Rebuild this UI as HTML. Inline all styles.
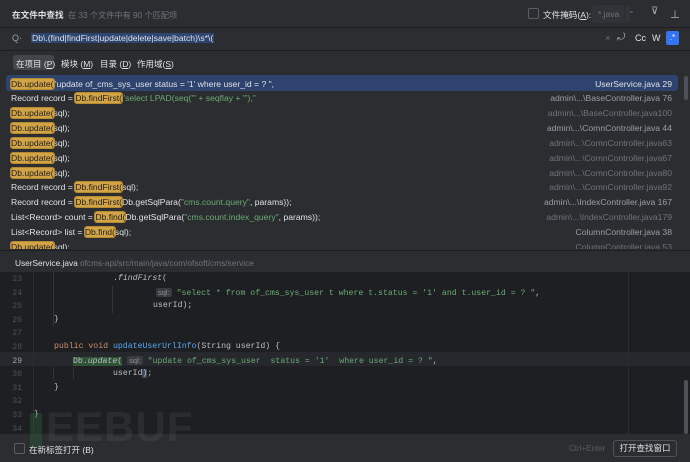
<!DOCTYPE html>
<html><head><meta charset="utf-8"><style>
*{margin:0;padding:0;box-sizing:border-box}
body{width:690px;height:462px;background:#2b2d30;font-family:"Liberation Sans","Noto Sans CJK SC",sans-serif;color:#dfe1e5;position:relative;overflow:hidden;font-size:8.6px}
.a{position:absolute;white-space:nowrap}
.hl{background:#d3a446;color:#1e1f22;border-radius:2px;outline:1px solid #b48a33}
.g{color:#6aab73}
.row{position:absolute;left:6px;width:672px;height:15px;line-height:15px;padding-left:5px}
.row .r{position:absolute;right:6px;top:0;color:#6f737a}
.row .r.b{color:#9a9ea6}
.code{font-family:"Liberation Mono",monospace;font-size:8.2px}
.ln{position:absolute;left:0;width:22px;text-align:right;color:#4b5059;font-family:"Liberation Mono",monospace;font-size:8px}
.cl{position:absolute;height:13.6px;line-height:13.6px;white-space:pre}
.kw{color:#cf8e6d}.st{color:#6aab73}.it{font-style:italic}
.hint{background:#393b40;color:#8c9099;border-radius:2px;padding:0 2px;font-family:"Liberation Sans",sans-serif;font-size:7.5px}
</style></head><body>
<!-- title -->
<div class="a" style="left:12px;top:9px;font-size:8.6px;font-weight:bold;color:#dfe1e5">在文件中查找</div>
<div class="a" style="left:68px;top:9px;font-size:8.2px;color:#6f737a">在 33 个文件中有 90 个匹配项</div>
<div class="a" style="left:528px;top:8px;width:11px;height:11px;border:1px solid #5a5d63;border-radius:2px"></div>
<div class="a" style="left:543px;top:9px;font-size:8.6px;color:#dfe1e5">文件掩码(<u>A</u>):</div>
<div class="a" style="left:592px;top:5px;width:38px;height:18px;background:#313338;border-radius:3px;color:#6f737a;font-size:8.5px;line-height:18px;padding-left:6px">*.java</div>
<div class="a" style="left:624px;top:5px;width:1px;height:18px;background:#2b2d30"></div>
<div class="a" style="left:628px;top:6px;color:#6f737a;font-size:8px">⌄</div>
<div class="a" style="left:651px;top:6px;color:#b4b8bf;font-size:10px">⊽</div>
<div class="a" style="left:670px;top:6px;color:#b4b8bf;font-size:10px">⊥</div>
<div class="a" style="left:0;top:27px;width:690px;height:1px;background:#1e1f22"></div>
<!-- search -->
<div class="a" style="left:12px;top:33px;color:#9a9ea6;font-size:9px">Q·</div>
<div class="a" style="left:31px;top:33px;font-size:8.6px;background:#2e4471;color:#dfe1e5;padding:0 1px">Db\.(find|findFirst|update|delete|save|batch)\s*\(</div>
<div class="a" style="left:605px;top:33px;color:#6f737a;font-size:9px">×</div>
<div class="a" style="left:617px;top:32px;color:#b4b8bf;font-size:10px">⤾</div>
<div class="a" style="left:635px;top:33px;color:#dfe1e5;font-size:9px">Cc</div>
<div class="a" style="left:652px;top:33px;color:#dfe1e5;font-size:9px">W</div>
<div class="a" style="left:666px;top:31px;width:13px;height:14px;background:#3574f0;border-radius:2px;color:#fff;font-size:8px;text-align:center;line-height:14px">.*</div>
<div class="a" style="left:0;top:50px;width:690px;height:1px;background:#1e1f22"></div>
<!-- tabs -->
<div class="a" style="left:13px;top:55px;width:41px;height:15px;background:#43454a;border-radius:3px"></div>
<div class="a" style="left:16px;top:58px;font-size:8.5px">在项目 (<u>P</u>)</div>
<div class="a" style="left:61px;top:58px;font-size:8.5px">模块 (<u>M</u>)</div>
<div class="a" style="left:100px;top:58px;font-size:8.5px">目录 (<u>D</u>)</div>
<div class="a" style="left:137px;top:58px;font-size:8.5px">作用域(<u>S</u>)</div>
<!-- results -->
<div class="a" style="left:6px;top:75px;width:672px;height:16px;background:#2e436e;border-radius:3px"></div>
<div class="row" style="top:77px"><span class="hl">Db.update(</span>"update of_cms_sys_user  status = '1'  where user_id = ? ",<span class="r b" style="color:#dfe1e5">UserService.java 29</span></div>
<div class="row" style="top:91px">Record record = <span class="hl">Db.findFirst(</span><span class="g">"select LPAD(seq('" + seqflay + "'),"</span><span class="r b">admin\...\BaseController.java 76</span></div>
<div class="row" style="top:106px"><span class="hl">Db.update(</span>sql);<span class="r">admin\...\BaseController.java100</span></div>
<div class="row" style="top:121px"><span class="hl">Db.update(</span>sql);<span class="r b">admin\...\ComnController.java 44</span></div>
<div class="row" style="top:136px"><span class="hl">Db.update(</span>sql);<span class="r">admin\...\ComnController.java63</span></div>
<div class="row" style="top:151px"><span class="hl">Db.update(</span>sql);<span class="r">admin\...\ComnController.java67</span></div>
<div class="row" style="top:166px"><span class="hl">Db.update(</span>sql);<span class="r">admin\...\ComnController.java80</span></div>
<div class="row" style="top:180px">Record record = <span class="hl">Db.findFirst(</span>sql);<span class="r">admin\...\ComnController.java92</span></div>
<div class="row" style="top:195px">Record record = <span class="hl">Db.findFirst(</span>Db.getSqlPara(<span class="g">"cms.count.query"</span>, params));<span class="r b">admin\...\IndexController.java 167</span></div>
<div class="row" style="top:210px">List&lt;Record&gt; count = <span class="hl">Db.find(</span>Db.getSqlPara(<span class="g">"cms.count.index_query"</span>, params));<span class="r">admin\...\IndexController.java179</span></div>
<div class="row" style="top:225px">List&lt;Record&gt; list = <span class="hl">Db.find(</span>sql);<span class="r b">ColumnController.java 38</span></div>
<div class="row" style="top:240px;height:9px;overflow:hidden"><span class="hl">Db.update(</span>sql);<span class="r">ColumnController.java 53</span></div>
<div class="a" style="left:684px;top:76px;width:4px;height:24px;background:#4e5157;border-radius:2px"></div>
<!-- preview header -->
<div class="a" style="left:0;top:250px;width:690px;height:1px;background:#1e1f22"></div>
<div class="a" style="left:15px;top:258px;font-size:8.3px;color:#dfe1e5">UserService.java <span style="color:#6f737a">ofcms-api/src/main/java/com/ofsoft/cms/service</span></div>
<!-- code -->
<div class="a" style="left:0;top:272px;width:690px;height:162px;background:#1e1f22"></div>
<div class="a" style="left:0;top:352px;width:690px;height:14px;background:#26282e"></div>
<div class="a" style="left:33px;top:272px;width:1px;height:162px;background:#2b2d30"></div>
<div class="a" style="left:628px;top:272px;width:1px;height:162px;background:#2b2d30"></div>
<div class="a" style="left:53px;top:272px;width:1px;height:54px;background:#313438"></div>
<div class="a" style="left:112px;top:286px;width:1px;height:27px;background:#313438"></div>
<div class="a" style="left:53px;top:367px;width:1px;height:13px;background:#313438"></div>
<div class="a" style="left:73px;top:367px;width:1px;height:13px;background:#313438"></div>
<div class="a" style="left:684px;top:380px;width:4px;height:54px;background:#4e5157;border-radius:2px"></div>
<div class="code">
<div class="ln" style="top:273px;line-height:13.6px">23<br>24<br>25<br>26<br>27<br>28<br><span style="color:#a1a3ab">29</span><br>30<br>31<br>32<br>33<br>34</div>
<div class="cl" style="left:113px;top:272px;color:#bcbec4">.<span class="it">findFirst</span>(</div>
<div class="cl" style="left:156px;top:286px"><span class="hint">sql:</span> <span class="st">"select * from of_cms_sys_user t where t.status = '1' and t.user_id = ? "</span><span style="color:#bcbec4">,</span></div>
<div class="cl" style="left:153px;top:299px;color:#bcbec4">userId);</div>
<div class="cl" style="left:54px;top:313px;color:#bcbec4">}</div>
<div class="cl" style="left:54px;top:340px;color:#bcbec4"><span class="kw">public void</span> <span style="color:#56a8f5">updateUserUrlInfo</span>(String userId) {</div>
<div class="cl" style="left:73px;top:354px;color:#bcbec4"><span style="background:#2e5435">Db.<span class="it">update</span>(</span> <span class="hint">sql:</span> <span class="st">"update of_cms_sys_user  status = '1'  where user_id = ? "</span>,</div>
<div class="cl" style="left:113px;top:367px;color:#bcbec4">userId<span style="background:#3b4a5c">)</span>;</div>
<div class="cl" style="left:54px;top:381px;color:#bcbec4">}</div>
<div class="cl" style="left:34px;top:408px;color:#bcbec4">}</div>
</div>
<!-- footer -->
<div class="a" style="left:0;top:434px;width:690px;height:28px;background:#2b2d30"></div>
<div class="a" style="left:14px;top:443px;width:11px;height:11px;border:1px solid #5a5d63;border-radius:2px"></div>
<div class="a" style="left:29px;top:444px;font-size:8.5px">在新标签打开 (B)</div>
<div class="a" style="left:569px;top:444px;font-size:8px;color:#5a5d63">Ctrl+Enter</div>
<div class="a" style="left:613px;top:440px;width:64px;height:17px;border:1px solid #4e5157;border-radius:3px;font-size:8.5px;text-align:center;line-height:15px">打开查找窗口</div>
<!-- watermark -->
<div class="a" style="left:30px;top:413px;width:12px;height:34px;background:#2f6a3c;opacity:.35"></div>
<div class="a" style="left:46px;top:404px;font-size:42px;line-height:46px;font-weight:bold;color:#888;opacity:.12;letter-spacing:1px">EEBUF</div>
</body></html>
